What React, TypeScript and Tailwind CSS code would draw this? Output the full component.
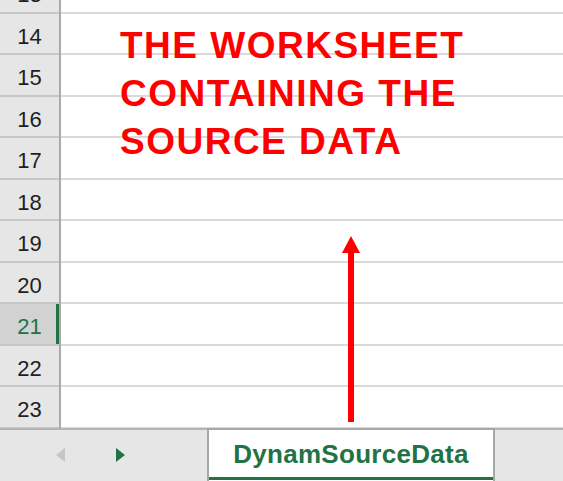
import React from 'react'

const rows = [13, 14, 15, 16, 17, 18, 19, 20, 21, 22, 23]
const ACTIVE_ROW = 21

// row heights alternate like Excel's 41.5px rows at this zoom
const rowHeight = (i: number) => (i % 2 === 0 ? 'h-[42px]' : 'h-[41px]')

const SheetRow = ({ n, index }: { n: number; index: number }) => {
  const active = n === ACTIVE_ROW
  return (
    <div className={`flex shrink-0 ${rowHeight(index)} ${index === 0 ? '-mt-[28px]' : ''}`}>
      {/* Row header */}
      <div
        className={`relative w-[59px] shrink-0 flex items-center justify-center pt-[5px] border-b-2 border-[#c8c8c8] text-[22px] ${
          active ? 'bg-[#d2d2d2] text-[#217346]' : 'bg-[#e6e6e6] text-[#1f1f1f]'
        }`}
      >
        {n}
        {active && <div className="absolute right-0 top-0 bottom-0 w-[3px] bg-[#217346]" />}
      </div>
      <div className="w-[2px] shrink-0 bg-[#ababab]" />
      {/* Cells */}
      <div className="flex-1 border-b-2 border-[#dadada] bg-white" />
    </div>
  )
}

export default function App() {
  return (
    <div
      className="w-[563px] h-[481px] overflow-hidden bg-white flex flex-col relative"
      style={{ fontFamily: '"Liberation Sans", Arial, sans-serif' }}
    >
      <div className="h-[428px] overflow-hidden flex flex-col shrink-0">
        {rows.map((n, i) => (
          <SheetRow key={n} n={n} index={i} />
        ))}
      </div>

      {/* Sheet tabs */}
      <div className="flex-1 flex bg-[#e6e6e6] border-t-2 border-[#b4b4b4]">
        <div className="w-[207px] flex items-center pb-[2px]">
          <div className="ml-[56px] w-0 h-0 border-y-[7.5px] border-y-transparent border-r-[9px] border-r-[#c6c6c6]" />
          <div className="ml-[51px] w-0 h-0 border-y-[7.5px] border-y-transparent border-l-[9px] border-l-[#217346]" />
        </div>
        <div className="-mt-[2px] w-[288px] bg-white border-x-2 border-t-2 border-[#a6a6a6] flex flex-col">
          <div className="flex-1 flex items-center justify-center pt-[2px] text-[26px] font-bold text-[#217346] tracking-[0.3px]">
            DynamSourceData
          </div>
          <div className="h-[3px] bg-[#217346] mb-[1px]" />
        </div>
        <div className="flex-1" />
      </div>

      {/* Annotation */}
      <div className="absolute left-[120px] top-[22px] text-[37px] leading-[48px] font-bold text-[#ff0000] tracking-[1.5px]">
        <div>THE WORKSHEET</div>
        <div>CONTAINING THE</div>
        <div>SOURCE DATA</div>
      </div>

      {/* Arrow pointing up at the text */}
      <svg className="absolute left-[340px] top-[236px]" width="22" height="188" viewBox="0 0 22 188">
        <polygon points="11,0 2,17 20,17" fill="#ff0000" />
        <rect x="8" y="16" width="6" height="170" fill="#ff0000" />
      </svg>
    </div>
  )
}
